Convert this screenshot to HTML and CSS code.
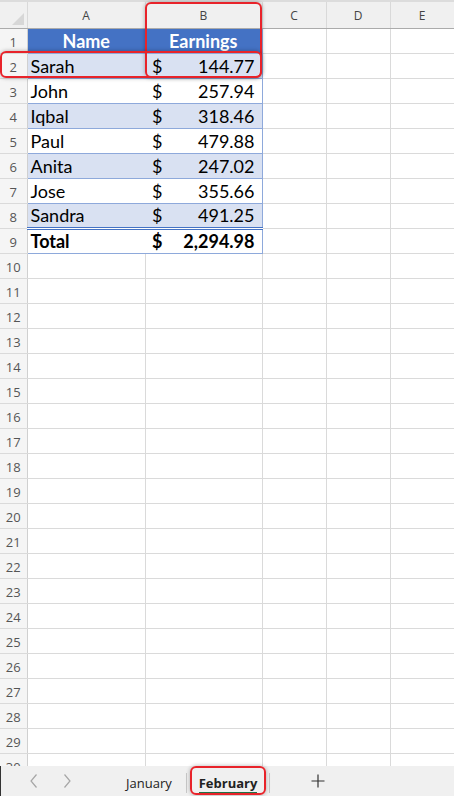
FILE: index.html
```html
<!DOCTYPE html>
<html>
<head>
    <meta charset="UTF-8">
    <title>February</title>
    <link rel="stylesheet" href="styles.css">
</head>
<body>
    <div id="sheet">
        <table id="grid">
            <colgroup>
                <col class="c-head">
                <col class="c-a">
                <col class="c-b">
                <col class="c-narrow">
                <col class="c-narrow">
                <col class="c-narrow">
            </colgroup>
            <thead>
                <tr>
                    <th class="corner"><span class="tri"></span></th>
                    <th>A</th>
                    <th>B</th>
                    <th>C</th>
                    <th>D</th>
                    <th>E</th>
                </tr>
            </thead>
            <tbody id="rows">
                <tr class="t-head">
                    <td class="rn">1</td>
                    <td class="tc">Name</td>
                    <td class="tc t-right">Earnings</td>
                    <td></td><td></td><td></td>
                </tr>
                <tr class="band">
                    <td class="rn">2</td>
                    <td class="tc name">Sarah</td>
                    <td class="tc t-right"><div class="acct"><span>$</span><span>144.77</span></div></td>
                    <td></td><td></td><td></td>
                </tr>
                <tr>
                    <td class="rn">3</td>
                    <td class="tc name">John</td>
                    <td class="tc t-right"><div class="acct"><span>$</span><span>257.94</span></div></td>
                    <td></td><td></td><td></td>
                </tr>
                <tr class="band">
                    <td class="rn">4</td>
                    <td class="tc name">Iqbal</td>
                    <td class="tc t-right"><div class="acct"><span>$</span><span>318.46</span></div></td>
                    <td></td><td></td><td></td>
                </tr>
                <tr>
                    <td class="rn">5</td>
                    <td class="tc name">Paul</td>
                    <td class="tc t-right"><div class="acct"><span>$</span><span>479.88</span></div></td>
                    <td></td><td></td><td></td>
                </tr>
                <tr class="band">
                    <td class="rn">6</td>
                    <td class="tc name">Anita</td>
                    <td class="tc t-right"><div class="acct"><span>$</span><span>247.02</span></div></td>
                    <td></td><td></td><td></td>
                </tr>
                <tr>
                    <td class="rn">7</td>
                    <td class="tc name">Jose</td>
                    <td class="tc t-right"><div class="acct"><span>$</span><span>355.66</span></div></td>
                    <td></td><td></td><td></td>
                </tr>
                <tr class="band">
                    <td class="rn">8</td>
                    <td class="tc name">Sandra</td>
                    <td class="tc t-right"><div class="acct"><span>$</span><span>491.25</span></div></td>
                    <td></td><td></td><td></td>
                </tr>
                <tr class="t-total">
                    <td class="rn">9</td>
                    <td class="tc name">Total</td>
                    <td class="tc t-right"><div class="acct"><span>$</span><span>2,294.98</span></div></td>
                    <td></td><td></td><td></td>
                </tr>
            </tbody>
        </table>

        <!-- callouts drawn over the grid -->
        <div class="callout col-b"></div>
        <div class="callout row-2"></div>
    </div>

    <div id="tabbar">
        <div class="nav">
            <button class="arrow">
                <svg width="10" height="16" viewBox="0 0 10 16"><path d="M7.5 1.5 L2 8 L7.5 14.5" fill="none" stroke="#a6a6a6" stroke-width="1.2"/></svg>
            </button>
            <button class="arrow">
                <svg width="10" height="16" viewBox="0 0 10 16"><path d="M2.5 1.5 L8 8 L2.5 14.5" fill="none" stroke="#a6a6a6" stroke-width="1.2"/></svg>
            </button>
        </div>
        <div class="tab">January</div>
        <div class="tab active"><span>February</span></div>
        <button class="add">
            <svg width="14" height="14" viewBox="0 0 14 14"><path d="M7 0.5 V13.5 M0.5 7 H13.5" stroke="#333" stroke-width="1.2"/></svg>
        </button>
        <div class="callout tab-mark"></div>
    </div>

    <script>
        // empty rows below the table
        const rows = document.getElementById('rows');
        for (let i = 10; i <= 30; i++) {
            const tr = document.createElement('tr');
            tr.innerHTML = `<td class="rn">${i}</td><td></td><td></td><td></td><td></td><td></td>`;
            rows.appendChild(tr);
        }
    </script>
</body>
</html>
```

FILE: styles.css
```css
* {
    box-sizing: border-box;
}

body {
    margin: 0;
    background: #fff;
    font-family: Lato, "Open Sans", sans-serif;
    overflow: hidden;
}

#sheet {
    position: relative;
    height: 766px;
    overflow: hidden;
}

#grid {
    width: 454px;
    table-layout: fixed;
    border-collapse: collapse;
}

.c-head { width: 27px; }
.c-a { width: 118px; }
.c-b { width: 117px; }
.c-narrow { width: 64px; }

th {
    height: 27px;
    padding: 0;
    background: #f0f0f0;
    border-top: 2px solid #dcdcdc;
    border-right: 1px solid #d9d9d9;
    border-bottom: 1px solid #ababab;
    font-family: "Open Sans", sans-serif;
    font-weight: normal;
    font-size: 12px;
    color: #444;
    text-align: center;
    padding-top: 2px;
}

th.corner {
    position: relative;
}

.tri {
    position: absolute;
    right: 3px;
    bottom: 3px;
    width: 0;
    height: 0;
    border-left: 12px solid transparent;
    border-bottom: 12px solid #d7d7d7;
}

td {
    height: 25px;
    padding: 0 3px;
    border-right: 1px solid #dadada;
    border-bottom: 1px solid #dadada;
    font-size: 18px;
    color: #000;
    white-space: nowrap;
    overflow: hidden;
    vertical-align: bottom;
    line-height: 23px;
}

td.rn {
    padding: 0;
    background: #f5f5f5;
    border-right: 1px solid #d0d0d0;
    font-family: "Open Sans", sans-serif;
    font-size: 13px;
    color: #555;
    text-align: center;
    line-height: 22px;
}

/* table style */
td.tc {
    background: #fff;
    border-right: none;
    border-bottom: 1px solid #8ea9db;
}

td.t-right {
    border-right: 1px solid #8ea9db;
}

.band td.tc {
    background: #d9e1f2;
}

.t-head td.tc {
    background: #4472c4;
    color: #fff;
    font-weight: bold;
    text-align: center;
}

.t-total td.tc {
    font-weight: bold;
    border-top: 3px double #4472c4;
}

.acct {
    display: flex;
    justify-content: space-between;
    padding: 0 4px 0 4px;
}

/* red highlight boxes */
.callout {
    position: absolute;
    border: 2px solid #e8232a;
    border-radius: 6px;
    box-shadow: 0 0 4px rgba(0, 0, 0, 0.3);
    pointer-events: none;
}

.col-b {
    left: 145px;
    top: 2px;
    width: 117px;
    height: 76px;
}

.row-2 {
    left: 0;
    top: 51px;
    width: 262px;
    height: 27px;
}

/* sheet tabs */
#tabbar {
    position: relative;
    display: flex;
    align-items: center;
    height: 30px;
    background: #f0f0f0;
    border-left: 1px solid #333;
    font-family: "Open Sans", sans-serif;
    font-size: 13px;
    color: #222;
}

button {
    background: none;
    border: none;
    padding: 0;
    display: flex;
    align-items: center;
    justify-content: center;
}

.nav {
    display: flex;
    width: 111px;
    padding-left: 16px;
}

.arrow {
    width: 33px;
    height: 30px;
}

.tab {
    height: 20px;
    line-height: 20px;
    padding: 0 14px;
    border-right: 1px solid #c8c8c8;
    margin-top: 3px;
}

.tab.active {
    padding: 0 12px;
    font-weight: bold;
}

.tab.active span {
    display: inline-block;
    line-height: 18px;
    border-bottom: 2px solid #1e7145;
    margin-top: 1px;
}

.add {
    width: 30px;
    height: 30px;
    margin-left: 33px;
}

.tab-mark {
    left: 189px;
    top: 0;
    width: 76px;
    height: 29px;
}
```
